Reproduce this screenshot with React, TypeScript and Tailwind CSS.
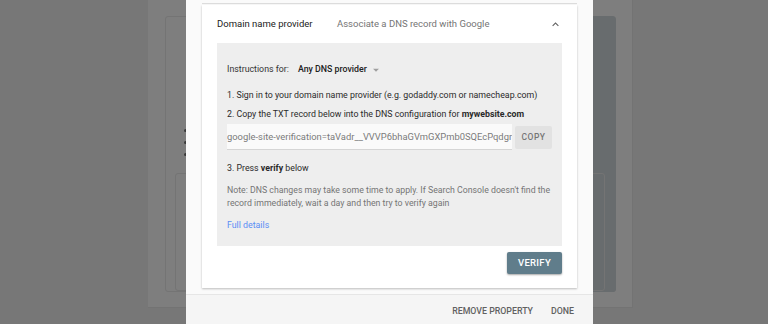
import React from "react";

export default function App() {
  return (
    <div
      className="relative w-[768px] h-[324px] overflow-hidden bg-[#777777]"
      style={{ fontFamily: "Roboto, 'Liberation Sans', sans-serif" }}
    >
      {/* background page */}
      <div className="absolute left-[148px] top-0 w-[485px] h-[308px] bg-[#7e7e7e] border-r border-b border-[#737373]">
        <div className="absolute left-[17px] top-[16px] w-[451px] h-[276px] border border-[#747474] rounded-[3px]">
          <div className="absolute right-[-1px] top-[-1px] w-[24px] h-[276px] bg-[#686c6e] rounded-tr-[4px] rounded-br-[3px]"></div>
          <div className="absolute left-[9px] top-[156px] w-[430px] h-[118px] border border-[#747474] rounded-[3px]"></div>
          <div className="absolute left-[18px] top-[112px] flex flex-col gap-[9px]">
            <div className="w-[3px] h-[3px] rounded-full bg-[#3a3a3a]"></div>
            <div className="w-[3px] h-[3px] rounded-full bg-[#3a3a3a]"></div>
            <div className="w-[3px] h-[3px] rounded-full bg-[#3a3a3a]"></div>
          </div>
        </div>
      </div>

      {/* dialog */}
      <div className="absolute left-[186px] top-0 w-[407px] h-[324px] bg-[#fafafa] flex flex-col">
        <div className="h-[4px] mx-[16px] border-b border-[#dcdcdc]"></div>
        <div className="mx-[16px] mt-[1px] h-[283px] bg-white shadow-[0_1px_2px_rgba(0,0,0,0.25)] flex flex-col">
          <div className="h-[38px] flex items-center px-[15px] text-[9.5px]">
            <span className="text-[#212121] w-[120px]">Domain name provider</span>
            <span className="text-[#757575]">Associate a DNS record with Google</span>
            <svg className="ml-auto mr-0" width="13" height="13" viewBox="0 0 24 24">
              <path d="M7.41 15.41 12 10.83l4.59 4.58L18 14l-6-6-6 6z" fill="#5f5f5f" />
            </svg>
          </div>
          <div className="mx-[15px] bg-[#eeeeee] h-[203px] px-[10px] pt-[20px] text-[8.8px] text-[#2a2a2a]">
            <div className="flex items-center h-[14px]">
              <span className="text-[#333]">Instructions for:</span>
              <span className="ml-[9px] font-medium text-[#212121]">Any DNS provider</span>
              <svg className="ml-[2px]" width="14" height="14" viewBox="0 0 24 24">
                <path d="M7 10l5 5 5-5z" fill="#9e9e9e" />
              </svg>
            </div>
            <div className="mt-[11px] leading-[14px] whitespace-nowrap">1. Sign in to your domain name provider (e.g. godaddy.com or namecheap.com)</div>
            <div className="mt-[5px] leading-[14px] whitespace-nowrap">
              2. Copy the TXT record below into the DNS configuration for <span className="font-bold">mywebsite.com</span>
            </div>
            <div className="mt-[3px] flex items-center gap-[3px]">
              <div className="w-[286px] h-[26px] bg-[#fafafa] border-b border-[#d5d5d5] flex items-end pb-[5px] text-[#7a7a7a] text-[9.4px] whitespace-nowrap overflow-hidden">
                google-site-verification=taVadr__VVVP6bhaGVmGXPmb0SQEcPqdgr
              </div>
              <div className="w-[37px] h-[23px] bg-[#e2e2e2] rounded-[2px] flex items-center justify-center text-[8.5px] font-medium tracking-[0.5px] text-[#757575]">
                COPY
              </div>
            </div>
            <div className="mt-[11px] leading-[14px]">
              3. Press <span className="font-bold">verify</span> below
            </div>
            <div className="mt-[9px] leading-[13px] text-[#757575] text-[8.75px]">
              Note: DNS changes may take some time to apply. If Search Console doesn't find the record immediately, wait a day and then try to verify again
            </div>
            <div className="mt-[9px] leading-[13px] text-[#5a8df5]">Full details</div>
          </div>
          <div className="flex justify-end px-[15px] mt-[6px]">
            <div className="w-[55px] h-[22px] bg-[#607d8b] rounded-[2px] shadow-[0_1px_2px_rgba(0,0,0,0.35)] flex items-center justify-center text-white text-[9.5px] font-medium tracking-[0.3px]">
              VERIFY
            </div>
          </div>
        </div>
        <div className="mt-[6px] flex-1 bg-[#f5f5f5] border-t border-[#e6e6e6] flex justify-end items-start pt-[10px] pr-[19px] gap-[18px] text-[8.8px] font-medium text-[#616161]">
          <span>REMOVE PROPERTY</span>
          <span>DONE</span>
        </div>
      </div>
    </div>
  );
}
